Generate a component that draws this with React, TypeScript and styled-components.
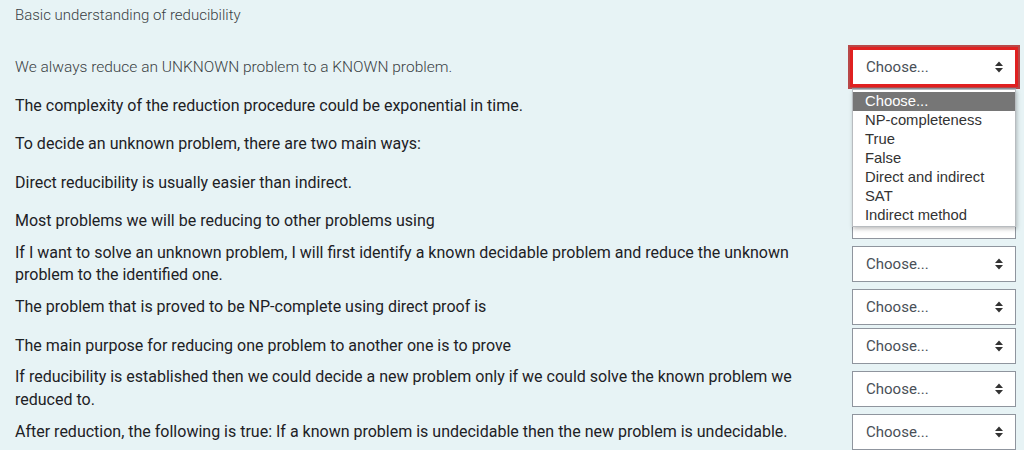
import React from 'react';
import styled, { createGlobalStyle } from 'styled-components';

const GlobalStyle = createGlobalStyle`
  html, body {
    margin: 0;
    padding: 0;
    background: #e7f3f5;
  }
  body {
    font-family: Roboto, "Liberation Sans", sans-serif;
    color: #1d2125;
  }
`;

const Page = styled.div`
  position: relative;
  width: 1024px;
  height: 450px;
  overflow: hidden;
  padding: 4px 8px 0 15px;
  box-sizing: border-box;
`;

const Title = styled.div`
  font-size: 15px;
  line-height: 22px;
  color: #3a3f44;
  font-weight: 300;
  margin-bottom: 22px;
`;

const Rows = styled.div`
  display: flex;
  flex-direction: column;
`;

const Row = styled.div`
  display: flex;
  align-items: center;
  padding: 1.25px 0;
`;

const Prompt = styled.div<{ $muted?: boolean }>`
  width: 837px;
  flex-shrink: 0;
  padding-right: 20px;
  box-sizing: border-box;
  font-size: ${({ $muted }) => ($muted ? '15.5px' : '16px')};
  font-weight: ${({ $muted }) => ($muted ? 300 : 400)};
  line-height: 22.5px;
  color: ${({ $muted }) => ($muted ? '#3a3f44' : '#1d2125')};
`;

const Select = styled.div<{ $focused?: boolean }>`
  width: 164px;
  height: 36px;
  box-sizing: border-box;
  background: #fff;
  border: 1px solid ${({ $focused }) => ($focused ? '#e02020' : '#8f959e')};
  box-shadow: ${({ $focused }) =>
    $focused ? '0 0 0 2px #e02020, 0 0 0 4px #b84848' : 'none'};
  display: flex;
  align-items: center;
  justify-content: space-between;
  padding: 0 12px 0 13px;
  font-size: 15px;
  color: #495057;
`;

const Arrows = styled.svg`
  width: 8px;
  height: 12px;
  display: block;
`;

const Menu = styled.ul`
  position: absolute;
  left: 852px;
  top: 89px;
  width: 164px;
  box-sizing: border-box;
  margin: 0;
  padding: 2px 0 1px;
  list-style: none;
  background: #fff;
  border: 1px solid #b8bcc0;
  box-shadow: 1px 2px 4px rgba(0, 0, 0, 0.25);
  font-family: "Liberation Sans", Arial, sans-serif;
  font-size: 14.8px;
`;

const MenuItem = styled.li<{ $active?: boolean }>`
  height: 19px;
  line-height: 19px;
  padding-left: 12px;
  background: ${({ $active }) => ($active ? '#767676' : 'transparent')};
  color: ${({ $active }) => ($active ? '#fff' : '#333')};
`;

const SelectArrows = () => (
  <Arrows viewBox="0 0 8 12">
    <path d="M4 0.5 L8 5 H0 Z M0 7 H8 L4 11.5 Z" fill="#333" />
  </Arrows>
);

const rows = [
  'The complexity of the reduction procedure could be exponential in time.',
  'To decide an unknown problem, there are two main ways:',
  'Direct reducibility is usually easier than indirect.',
  'Most problems we will be reducing to other problems using',
  'If I want to solve an unknown problem, I will first identify a known decidable problem and reduce the unknown problem to the identified one.',
  'The problem that is proved to be NP-complete using direct proof is',
  'The main purpose for reducing one problem to another one is to prove',
  'If reducibility is established then we could decide a new problem only if we could solve the known problem we reduced to.',
  'After reduction, the following is true: If a known problem is undecidable then the new problem is undecidable.',
];

const options = [
  'Choose...',
  'NP-completeness',
  'True',
  'False',
  'Direct and indirect',
  'SAT',
  'Indirect method',
];

const App: React.FC = () => (
  <>
    <GlobalStyle />
    <Page>
      <Title>Basic understanding of reducibility</Title>
      <Rows>
        <Row>
          <Prompt $muted>We always reduce an UNKNOWN problem to a KNOWN problem.</Prompt>
          <Select $focused>
            Choose...
            <SelectArrows />
          </Select>
        </Row>
        {rows.map((text, i) => (
          <Row key={i}>
            <Prompt>{text}</Prompt>
            <Select>
              Choose...
              <SelectArrows />
            </Select>
          </Row>
        ))}
      </Rows>
      <Menu>
        {options.map((o, i) => (
          <MenuItem key={o} $active={i === 0}>
            {o}
          </MenuItem>
        ))}
      </Menu>
    </Page>
  </>
);

export default App;
